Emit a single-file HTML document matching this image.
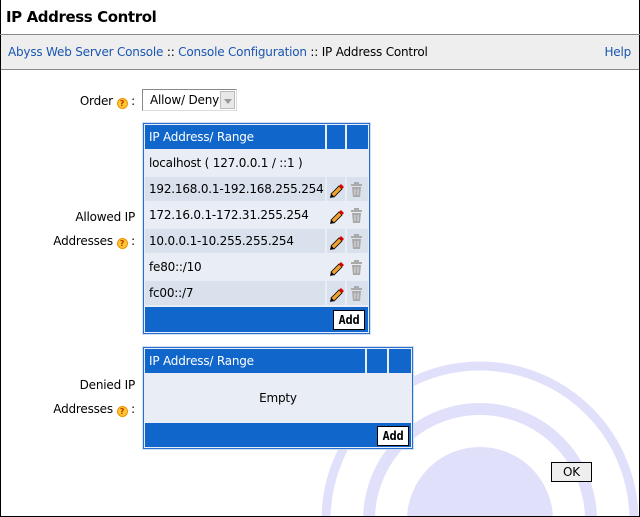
<!DOCTYPE html>
<html><head><meta charset="utf-8"><style>
*{margin:0;padding:0;box-sizing:border-box}
html,body{width:640px;height:517px;overflow:hidden}
body{position:relative;background:#fff;font-family:"DejaVu Sans","Liberation Sans",sans-serif;font-size:12px;letter-spacing:-0.2px;color:#000}
.frame{position:absolute;left:0;top:0;width:640px;height:517px;border:1px solid #000;border-top:none}
.title{position:absolute;left:0;top:0;width:640px;height:35px;border-bottom:1px solid #888;font-weight:bold;font-size:15px;padding:8px 0 0 6px;letter-spacing:-0.4px}
.crumb{position:absolute;left:1px;top:35px;width:638px;height:35px;background:#eee;border-bottom:1px solid #888;padding:10px 0 0 7px;font-size:12px}
.crumb a{color:#1a56b0;text-decoration:none}
.help{position:absolute;right:8px;top:10px}
.lbl{position:absolute;text-align:right;font-size:12px;line-height:24px}
.q{display:inline-block;width:11px;height:11px;border-radius:50%;background:#ffc830;border:1px solid #f09000;color:#c03000;font-size:8px;line-height:9px;text-align:center;font-weight:bold;vertical-align:-1px;letter-spacing:0}
.sel{position:absolute;left:142px;top:89px;width:95px;height:22px;border:1px solid #888;border-right-color:#ddd;border-bottom-color:#ddd;background:#fff;padding:3px 0 0 7px}
.sel .ar{position:absolute;right:1px;top:1px;width:15px;height:18px;background:#e8e8e8;border:1px solid #bbb}
.sel .ar:after{content:"";position:absolute;left:3px;top:7px;border:4px solid transparent;border-top:5px solid #999}
.tb{position:absolute;border:1px solid #2a6fd0;outline:1px solid #cfe0f5;background:#e9edf5}
.r{position:absolute;left:1px;height:24px;line-height:24px;padding-left:4px;white-space:nowrap;overflow:hidden}
.h{background:#1166cc;color:#fff}
.d{background:#d9e1ed}
.add{position:absolute;width:32px;height:20px;border:1px solid #000;background:#fff;font-weight:bold;font-family:"DejaVu Sans Mono","Liberation Mono",monospace;font-size:12px;text-align:center;line-height:18px}
.ok{position:absolute;left:551px;top:462px;width:41px;height:20px;border:1px solid #000;background:#eee;text-align:center;line-height:18px;font-size:12px}
</style></head><body>
<svg style="position:absolute;left:0;top:0" width="640" height="517">
<circle cx="480" cy="520" r="154" fill="none" stroke="#e0e0fb" stroke-width="9"/>
<circle cx="480" cy="520" r="111" fill="none" stroke="#e0e0fb" stroke-width="12"/>
<circle cx="480" cy="520" r="73" fill="#e0e0fb"/>
</svg>
<div class="frame"></div>
<div class="title">IP Address Control</div>
<div class="crumb"><a>Abyss Web Server Console</a> :: <a>Console Configuration</a> :: IP Address Control<a class="help">Help</a></div>

<div class="lbl" style="right:505px;top:89px">Order <span class="q">?</span> :</div>
<div class="sel">Allow/ Deny<span class="ar"></span></div>

<div class="lbl" style="right:505px;top:205px">Allowed IP<br>Addresses <span class="q">?</span> :</div>
<div class="lbl" style="right:505px;top:373px">Denied IP<br>Addresses <span class="q">?</span> :</div>

<div class="tb" style="left:143px;top:123px;width:227px;height:211px">
 <div class="r h" style="top:1px;width:180px">IP Address/ Range</div>
 <div class="r h" style="top:1px;left:183px;width:18px"></div>
 <div class="r h" style="top:1px;left:203px;width:21px"></div>
 <div class="r" style="top:27px;width:223px">localhost ( 127.0.0.1 / ::1 )</div>
 <div class="r d" style="top:53px;width:180px">192.168.0.1-192.168.255.254</div>
 <div class="r" style="top:79px;width:180px">172.16.0.1-172.31.255.254</div>
 <div class="r d" style="top:105px;width:180px">10.0.0.1-10.255.255.254</div>
 <div class="r" style="top:131px;width:180px">fe80::/10</div>
 <div class="r d" style="top:157px;width:180px">fc00::/7</div>
 <div class="r d" style="top:53px;left:183px;width:18px"></div><div class="r d" style="top:53px;left:203px;width:21px"></div>
 <div class="r d" style="top:105px;left:183px;width:18px"></div><div class="r d" style="top:105px;left:203px;width:21px"></div>
 <div class="r d" style="top:157px;left:183px;width:18px"></div><div class="r d" style="top:157px;left:203px;width:21px"></div>
 <div class="r h" style="top:183px;width:223px;height:25px"></div>
 <div class="add" style="left:189px;top:186px">Add</div>
</div>
<svg style="position:absolute;left:0;top:0" width="640" height="517">
<g id="ic">
<path d="M331 220 l8 -8 l3 3 l-8 8 z" fill="#f0a030" stroke="#000" stroke-width="0.8"/>
<path d="M339 212 l2 -2 l3 3 l-2 2 z" fill="#d00"/>
<path d="M331 220 l-1 4 l4 -1 z" fill="#000"/>
<rect x="351" y="210" width="11" height="2" fill="#aaa"/><rect x="354" y="208" width="5" height="2" fill="#aaa"/>
<path d="M352 213 h9 l-1 10 h-7 z" fill="#aaa"/>
<path d="M355 215 v6 M358 215 v6" stroke="#ddd"/>
</g>
<use href="#ic" y="-26"/><use href="#ic" y="26"/><use href="#ic" y="52"/><use href="#ic" y="78"/>
</svg>

<div class="tb" style="left:143px;top:347px;width:270px;height:102px">
 <div class="r h" style="top:1px;width:220px">IP Address/ Range</div>
 <div class="r h" style="top:1px;left:223px;width:20px"></div>
 <div class="r h" style="top:1px;left:245px;width:22px"></div>
 <div class="r" style="top:27px;width:266px;height:46px;line-height:46px;text-align:center;padding:0">Empty</div>
 <div class="r h" style="top:75px;width:266px;height:24px"></div>
 <div class="add" style="left:233px;top:78px">Add</div>
</div>

<div class="ok">OK</div>
</body></html>
